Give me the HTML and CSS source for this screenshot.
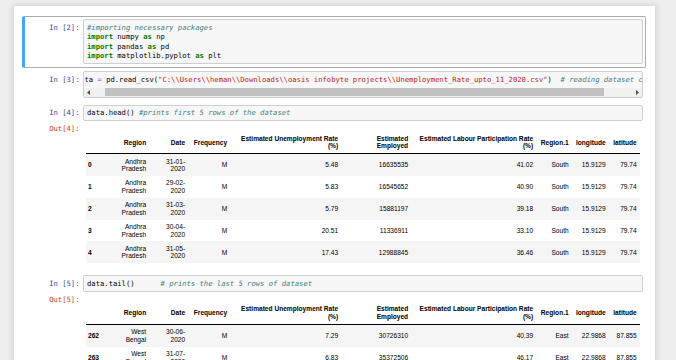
FILE: index.html
```html
<!DOCTYPE html>
<html lang="en">
<head>
    <meta charset="UTF-8">
    <meta name="viewport" content="width=device-width, initial-scale=1.0">
    <title>Unemployment Analysis - Jupyter Notebook</title>
    <link rel="stylesheet" href="styles.css">
</head>
<body>

<div class="notebook">

    <div class="cell selected">
        <div class="row">
            <div class="prompt">In [2]:</div>
            <div class="input-area">
<pre class="code"><span class="cm">#importing necessary packages</span>
<span class="kw">import</span> numpy <span class="kw">as</span> np
<span class="kw">import</span> pandas <span class="kw">as</span> pd
<span class="kw">import</span> matplotlib.pyplot <span class="kw">as</span> plt</pre>
            </div>
        </div>
    </div>

    <div class="cell">
        <div class="row">
            <div class="prompt">In [3]:</div>
            <div class="input-area scrolled">
<pre class="code">ta <span class="op">=</span> pd.read_csv(<span class="st">"C:\\Users\\heman\\Downloads\\oasis infobyte projects\\Unemployment_Rate_upto_11_2020.csv"</span>)  <span class="cm"># reading dataset csv file</span></pre>
                <div class="hscroll">
                    <div class="sb-btn">
                        <svg width="3" height="5" viewBox="0 0 3 5"><polygon points="3,0 0,2.5 3,5"/></svg>
                    </div>
                    <div class="sb-track"><div class="sb-thumb"></div></div>
                    <div class="sb-btn">
                        <svg width="3" height="5" viewBox="0 0 3 5"><polygon points="0,0 3,2.5 0,5"/></svg>
                    </div>
                </div>
            </div>
        </div>
    </div>

    <div class="cell">
        <div class="row">
            <div class="prompt">In [4]:</div>
            <div class="input-area">
<pre class="code">data.head() <span class="cm">#prints first 5 rows of the dataset</span></pre>
            </div>
        </div>
        <div class="row output">
            <div class="prompt out">Out[4]:</div>
            <div class="output-sub">
                <table class="dataframe">
                    <thead>
                        <tr>
                            <th></th>
                            <th>Region</th>
                            <th>Date</th>
                            <th>Frequency</th>
                            <th>Estimated Unemployment Rate<br>(%)</th>
                            <th>Estimated<br>Employed</th>
                            <th>Estimated Labour Participation Rate<br>(%)</th>
                            <th>Region.1</th>
                            <th>longitude</th>
                            <th>latitude</th>
                        </tr>
                    </thead>
                    <tbody>
                        <tr>
                            <th>0</th><td>Andhra<br>Pradesh</td><td>31-01-<br>2020</td><td>M</td><td>5.48</td>
                            <td>16635535</td><td>41.02</td><td>South</td><td>15.9129</td><td>79.74</td>
                        </tr>
                        <tr>
                            <th>1</th><td>Andhra<br>Pradesh</td><td>29-02-<br>2020</td><td>M</td><td>5.83</td>
                            <td>16545652</td><td>40.90</td><td>South</td><td>15.9129</td><td>79.74</td>
                        </tr>
                        <tr>
                            <th>2</th><td>Andhra<br>Pradesh</td><td>31-03-<br>2020</td><td>M</td><td>5.79</td>
                            <td>15881197</td><td>39.18</td><td>South</td><td>15.9129</td><td>79.74</td>
                        </tr>
                        <tr>
                            <th>3</th><td>Andhra<br>Pradesh</td><td>30-04-<br>2020</td><td>M</td><td>20.51</td>
                            <td>11336911</td><td>33.10</td><td>South</td><td>15.9129</td><td>79.74</td>
                        </tr>
                        <tr>
                            <th>4</th><td>Andhra<br>Pradesh</td><td>31-05-<br>2020</td><td>M</td><td>17.43</td>
                            <td>12988845</td><td>36.46</td><td>South</td><td>15.9129</td><td>79.74</td>
                        </tr>
                    </tbody>
                </table>
            </div>
        </div>
    </div>

    <div class="cell">
        <div class="row">
            <div class="prompt">In [5]:</div>
            <div class="input-area">
<pre class="code">data.tail()      <span class="cm"># prints the last 5 rows of dataset</span></pre>
            </div>
        </div>
        <div class="row output">
            <div class="prompt out">Out[5]:</div>
            <div class="output-sub">
                <table class="dataframe">
                    <thead>
                        <tr>
                            <th></th>
                            <th>Region</th>
                            <th>Date</th>
                            <th>Frequency</th>
                            <th>Estimated Unemployment Rate<br>(%)</th>
                            <th>Estimated<br>Employed</th>
                            <th>Estimated Labour Participation Rate<br>(%)</th>
                            <th>Region.1</th>
                            <th>longitude</th>
                            <th>latitude</th>
                        </tr>
                    </thead>
                    <tbody>
                        <tr>
                            <th>262</th><td>West<br>Bengal</td><td>30-06-<br>2020</td><td>M</td><td>7.29</td>
                            <td>30726310</td><td>40.39</td><td>East</td><td>22.9868</td><td>87.855</td>
                        </tr>
                        <tr>
                            <th>263</th><td>West<br>Bengal</td><td>31-07-<br>2020</td><td>M</td><td>6.83</td>
                            <td>35372506</td><td>46.17</td><td>East</td><td>22.9868</td><td>87.855</td>
                        </tr>
                        <tr>
                            <th>264</th><td>West<br>Bengal</td><td>31-08-<br>2020</td><td>M</td><td>14.87</td>
                            <td>33298644</td><td>47.48</td><td>East</td><td>22.9868</td><td>87.855</td>
                        </tr>
                        <tr>
                            <th>265</th><td>West<br>Bengal</td><td>30-09-<br>2020</td><td>M</td><td>9.35</td>
                            <td>35707239</td><td>47.73</td><td>East</td><td>22.9868</td><td>87.855</td>
                        </tr>
                        <tr>
                            <th>266</th><td>West<br>Bengal</td><td>31-10-<br>2020</td><td>M</td><td>9.98</td>
                            <td>33962549</td><td>45.63</td><td>East</td><td>22.9868</td><td>87.855</td>
                        </tr>
                    </tbody>
                </table>
            </div>
        </div>
    </div>

</div>

</body>
</html>
```

FILE: styles.css
```css
body {
    margin: 0;
    background-color: #eee;
    font-family: "Liberation Sans", Arial, sans-serif;
    overflow: hidden;
}
.notebook {
    width: 641px;
    margin: 6px 0 0 14px;
    padding: 9.5px 9px 20px 8px;
    box-sizing: border-box;
    background-color: #fff;
    box-shadow: 0 0 6px 1px rgba(87, 87, 87, 0.2);
}
.cell {
    display: flex;
    flex-direction: column;
    padding: 2.5px;
    border: 1px solid transparent;
    border-radius: 2px;
}
.cell.selected {
    border-color: #ababab;
    border-left-color: #42a5f5;
    background: linear-gradient(to right, #42a5f5 2px, transparent 2px);
}
.row {
    display: flex;
}
.prompt {
    width: 57.5px;
    flex-shrink: 0;
    box-sizing: border-box;
    padding: 3.5px 3.5px 0 0;
    text-align: right;
    font: 7.2px/9.5px "DejaVu Sans Mono", monospace;
    color: #303f9f;
}
.prompt.out {
    padding-top: 0;
    color: #d84315;
}
.input-area {
    flex: 1;
    min-width: 0;
    background-color: #f7f7f7;
    border: 1px solid #cfcfcf;
    border-radius: 2px;
    overflow: hidden;
}
.code {
    margin: 0;
    padding: 2.5px 3px;
    font: 7.2px/9.5px "DejaVu Sans Mono", monospace;
    color: #000;
    white-space: pre;
    overflow: hidden;
}
.scrolled .code {
    padding: 2.5px 0 3.5px 0.5px;
}
.cm {
    color: #408080;
    font-style: italic;
}
.kw {
    color: #008000;
    font-weight: bold;
}
.st {
    color: #ba2121;
}
.op {
    color: #aa22ff;
}

/* horizontal scrollbar of the long line */
.hscroll {
    display: flex;
    height: 9px;
    background-color: #f1f1f1;
}
.sb-btn {
    width: 9px;
    display: flex;
    align-items: center;
    justify-content: center;
}
.sb-btn svg {
    fill: #505050;
}
.sb-track {
    flex: 1;
    padding: 0.5px 0;
}
.sb-thumb {
    margin-left: 12px;
    width: 499px;
    height: 100%;
    background-color: #c1c1c1;
}

/* output */
.output {
    padding: 3px 0 5px 0;
}
.output-sub {
    flex: 1;
    min-width: 0;
    padding-left: 3px;
}
.dataframe {
    margin-top: 7.5px;
    width: 554px;
    table-layout: fixed;
    border-collapse: collapse;
    border-spacing: 0;
    font-size: 6.6px;
    line-height: 7.6px;
    color: #000;
}
.dataframe th,
.dataframe td {
    padding: 3.3px;
    text-align: right;
    vertical-align: middle;
    white-space: nowrap;
}
.dataframe th {
    font-weight: bold;
}
.dataframe thead th {
    border-bottom: 1px solid #000;
}
.dataframe tbody th {
    text-align: left;
    padding-left: 2px;
}
.dataframe tbody tr:nth-child(odd) {
    background-color: #f5f5f5;
}
.dataframe thead th:nth-child(1) { width: 19.4px; }
.dataframe thead th:nth-child(2) { width: 30.9px; }
.dataframe thead th:nth-child(3) { width: 32.4px; }
.dataframe thead th:nth-child(4) { width: 35.4px; }
.dataframe thead th:nth-child(5) { width: 104.4px; }
.dataframe thead th:nth-child(6) { width: 63.4px; }
.dataframe thead th:nth-child(7) { width: 118.4px; }
.dataframe thead th:nth-child(8) { width: 28.9px; }
.dataframe thead th:nth-child(9) { width: 30.4px; }
.dataframe thead th:nth-child(10) { width: 24.4px; }
```
